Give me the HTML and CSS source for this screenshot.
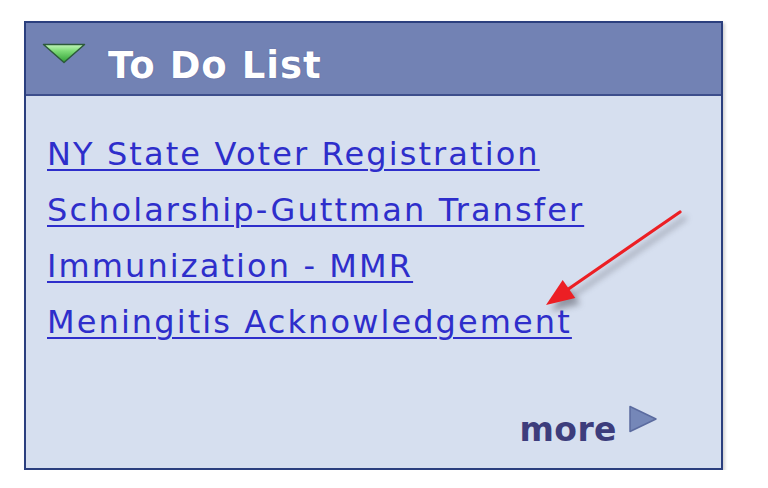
FILE: index.html
```html
<!DOCTYPE html>
<html lang="en">
<head>
    <meta charset="UTF-8">
    <meta name="viewport" content="width=device-width, initial-scale=1.0">
    <title>To Do List</title>
    <link rel="stylesheet" href="styles.css">
</head>
<body>
    <div class="pagelet">
        <!-- header -->
        <div class="pagelet-header">
            <svg class="collapse-icon" width="44" height="21" viewBox="0 0 44 21">
                <defs>
                    <linearGradient id="green" x1="0" y1="0" x2="0" y2="1">
                        <stop offset="0" stop-color="#c4f5bd"/>
                        <stop offset="0.35" stop-color="#7fdc78"/>
                        <stop offset="1" stop-color="#2f9e35"/>
                    </linearGradient>
                </defs>
                <polygon points="1.5,1.5 42.5,1.5 22,19.5" fill="url(#green)" stroke="#2c5a3a" stroke-width="1.5" stroke-linejoin="round"/>
            </svg>
            <h2>To Do List</h2>
        </div>

        <!-- list -->
        <div class="pagelet-body">
            <ul class="todo-list">
                <li><a href="#">NY State Voter Registration</a></li>
                <li><a href="#">Scholarship-Guttman Transfer</a></li>
                <li><a href="#">Immunization - MMR</a></li>
                <li><a href="#">Meningitis Acknowledgement</a></li>
            </ul>
            <div class="more-row">
                <a href="#" class="more">more</a>
                <svg class="more-icon" width="30" height="28" viewBox="0 0 30 28">
                    <polygon points="2,1.5 28,14 2,26.5" fill="#7587b8" stroke="#5b6b9f" stroke-width="1.5" stroke-linejoin="round"/>
                </svg>
            </div>
        </div>

        <!-- red annotation arrow -->
        <svg class="annotation" width="190" height="140" viewBox="0 0 190 140">
            <line x1="160" y1="20" x2="47" y2="98" stroke="#ec1f24" stroke-width="3.2" stroke-linecap="round"/>
            <polygon points="26,113 55.3,106 42.7,88" fill="#ec1f24"/>
        </svg>
    </div>
</body>
</html>
```

FILE: styles.css
```css
* {
    margin: 0;
    padding: 0;
    box-sizing: border-box;
}

body {
    background-color: #fff;
    font-family: "DejaVu Sans", Verdana, sans-serif;
}

.pagelet {
    position: relative;
    width: 699px;
    height: 449px;
    margin: 21px 0 0 24px;
    border: 2px solid #2b3f7e;
    background-color: #d6dfef;
    box-shadow: 2px 2px 3px rgba(0, 0, 0, 0.18);
    display: flex;
    flex-direction: column;
}

.pagelet-header {
    display: flex;
    align-items: flex-start;
    height: 73px;
    padding: 21px 0 0 16px;
    background-color: #7282b4;
    border-bottom: 2px solid #3d4e8c;
}

.collapse-icon {
    margin-top: -1px;
    margin-right: 22px;
}

.pagelet-header h2 {
    color: #fff;
    font-size: 37px;
    font-weight: bold;
    line-height: 44px;
    letter-spacing: 1px;
    text-shadow: 0 0 1px rgba(40, 40, 120, 0.5);
}

.pagelet-body {
    flex: 1;
    display: flex;
    flex-direction: column;
    padding: 30px 0 12px 21px;
}

.todo-list {
    list-style: none;
}

.todo-list li {
    font-size: 32px;
    line-height: 56px;
    letter-spacing: 2.1px;
}

.todo-list a {
    color: #2e2ecb;
    text-decoration: underline;
    text-decoration-thickness: 2px;
    text-underline-offset: 4px;
}

.more-row {
    margin-top: auto;
    align-self: flex-end;
    padding-right: 63px;
    line-height: 40px;
}

.more {
    color: #3d3d7c;
    font-size: 33px;
    font-weight: bold;
    text-decoration: none;
    letter-spacing: 0.4px;
}

.more-icon {
    vertical-align: 8px;
    margin-left: 6px;
}

.annotation {
    position: absolute;
    left: 494px;
    top: 169px;
    filter: drop-shadow(5px 6px 3px rgba(60, 60, 70, 0.45));
}
```
